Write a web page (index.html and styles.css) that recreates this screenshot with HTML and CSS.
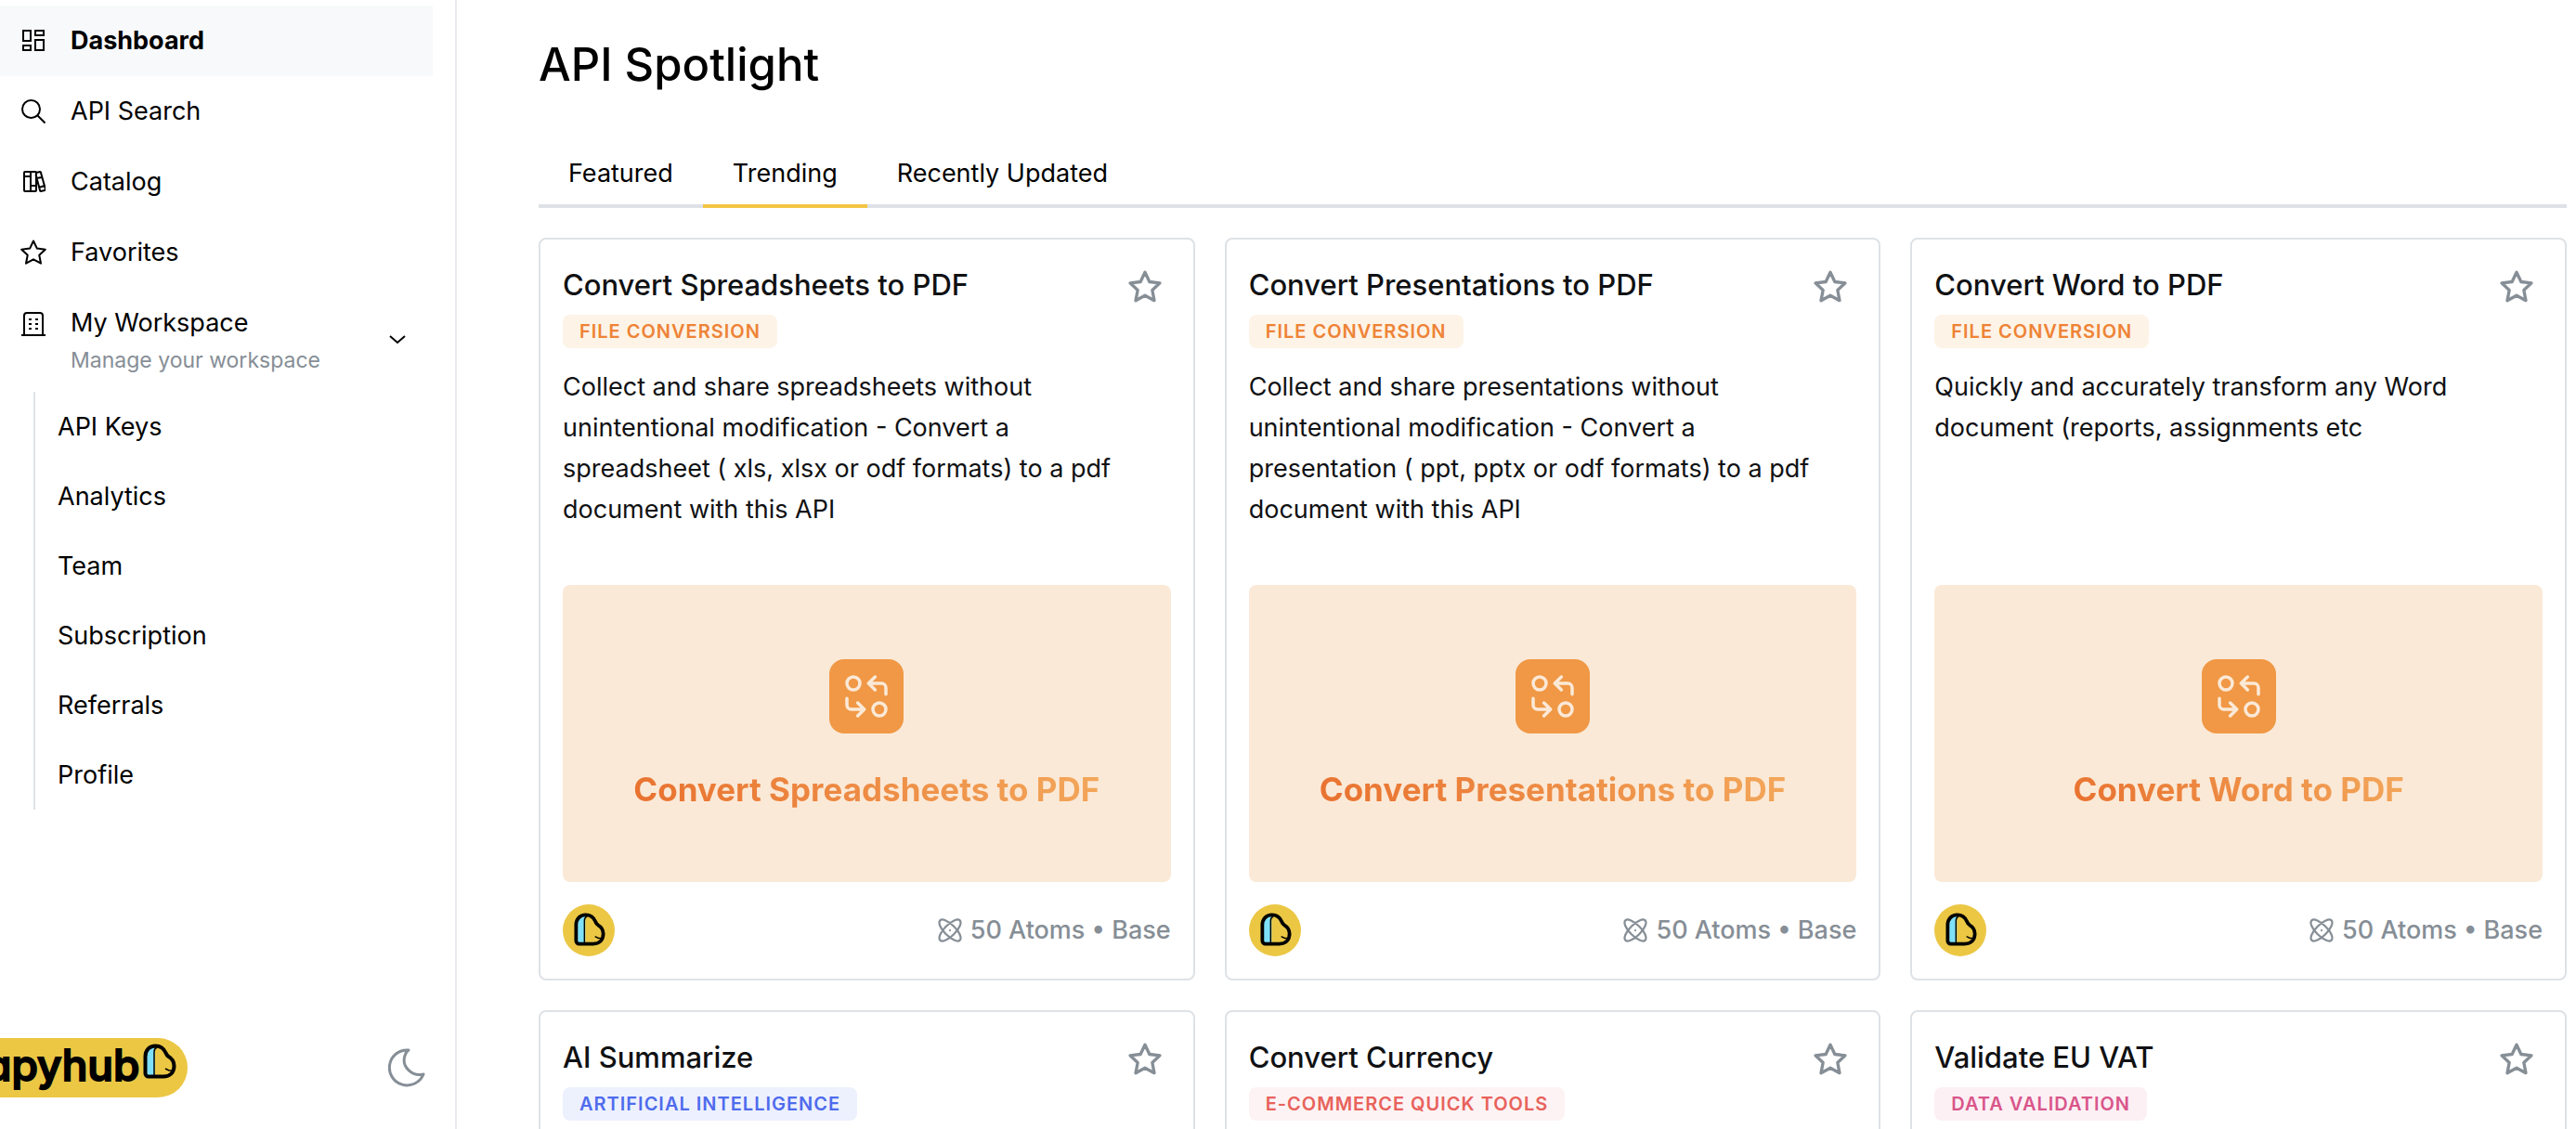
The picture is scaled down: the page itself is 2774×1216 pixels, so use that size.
FILE: index.html
```
<!doctype html>
<html lang="en">
<head>
<meta charset="utf-8">
<title>apyhub | Dashboard</title>
<link rel="stylesheet" href="styles.css">
</head>
<body>
<!-- shared icons -->
<svg class="sprite" aria-hidden="true">
<symbol id="star" viewBox="0 0 24 24"><path d="M12 2.6l2.9 6.1 6.7.8-4.9 4.6 1.3 6.7-6-3.3-6 3.3 1.3-6.7-4.9-4.6 6.7-.8z" stroke-linejoin="round"/></symbol>
<symbol id="transform" viewBox="0 0 24 24"><circle cx="6" cy="6" r="3"/><circle cx="18" cy="18" r="3"/><path d="M21 11V8a2 2 0 0 0-2-2h-6l3 3m0-6l-3 3M3 13v3a2 2 0 0 0 2 2h6l-3-3m0 6l3-3"/></symbol>
<symbol id="atom" viewBox="0 0 24 24"><path d="M12 12v.01M19.1 4.9c-1.6-1.6-6 .3-9.9 4.3s-5.900 8.300-4.300 9.900 6-.3 9.900-4.300 5.900-8.300 4.300-9.900zM4.900 4.900c-1.600 1.600.3 6 4.300 9.900s8.300 5.900 9.900 4.300-.3-6-4.300-9.900-8.300-5.900-9.900-4.300z"/></symbol>
<symbol id="mark" viewBox="0 0 36 38"><path d="M2 36V13C2 7 6 2.500 12 2h1v34z" fill="#7fe0f8" stroke="none"/><path d="M6 35.500a3.500 3.500 0 0 1-3.500-3.500V14C2.500 7 7 2.500 13.500 2.500c5.500 0 9 3 11 7.500.8 2 1.500 3 3 4 3.500 2 6 5.500 6 10 0 7-4.500 11.500-11.500 11.500z" stroke-width="4" stroke-linejoin="round"/><path d="M12 35V9c0-3 1-4 3-5M24 27l4 2h4" stroke-width="1.500"/></symbol>
</svg>

<aside class="sidebar">
<nav>
<a href="#" class="item active">
<svg class="icon" viewBox="0 0 26 26"><path d="M2 2h8v11H2zM15 2h9v5h-9zM2 18h8v5H2zM15 12h9v11h-9z"/></svg>
Dashboard</a>
<a href="#" class="item">
<svg class="icon" viewBox="0 0 26 26"><circle cx="10.500" cy="10.500" r="9.500"/><path d="M17.500 17.500l8 8"/></svg>
API Search</a>
<a href="#" class="item">
<svg class="icon" viewBox="0 0 26 26"><path d="M4 2h5q1 0 1 1v19q0 1-1 1H4q-1 0-1-1V3q0-1 1-1zM10 3q0-1 1-1h4q1 0 1 1v19q0 1-1 1h-4q-1 0-1-1zM3 7h6M10 17h5M16 3l4-1q1 0 1 1l5 18q0 1-1 1l-4 1q-1 0-1-1L15.500 5M16 9l6-1M19 19l6-2"/></svg>
Catalog</a>
<a href="#" class="item">
<svg class="icon wide"><use href="#star"/></svg>
Favorites</a>
<button class="item workspace">
<svg class="icon" viewBox="0 0 26 26"><path d="M0 25h26M3 25V4q0-3 3-3h14q3 0 3 3v21M8 8h3m4 0h3M8 13h3m4 0h3M8 18h3m4 0h3"/></svg>
<span class="names">My Workspace<small>Manage your workspace</small></span>
<svg class="chevron" viewBox="0 0 18 10"><path d="M1 1l8 7 8-7"/></svg>
</button>
<div class="subnav">
<a href="#">API Keys</a>
<a href="#">Analytics</a>
<a href="#">Team</a>
<a href="#">Subscription</a>
<a href="#">Referrals</a>
<a href="#">Profile</a>
</div>
</nav>
<footer class="bottom">
<a href="#" class="logo">apyhub<svg><use href="#mark"/></svg></a>
<button class="theme" aria-label="Toggle dark mode">
<svg viewBox="0 0 40 42"><path d="M22 2A19 19 0 1 0 38 28C26 31 14 20 18 8Q19 4 22 2z"/></svg>
</button>
</footer>
</aside>

<main>
<h1>API Spotlight</h1>
<div class="tabs" role="tablist">
<button role="tab">Featured</button>
<button role="tab" class="selected" aria-selected="true">Trending</button>
<button role="tab">Recently Updated</button>
</div>

<section class="cards">
<article class="card">
<header><h2>Convert Spreadsheets to PDF</h2><button class="fav" aria-label="Add to favorites"><svg><use href="#star"/></svg></button></header>
<span class="badge orange">File Conversion</span>
<p>Collect and share spreadsheets without unintentional modification - Convert a spreadsheet ( xls, xlsx or odf formats) to a pdf document with this API</p>
<div class="cover"><span class="tile"><svg><use href="#transform"/></svg></span><strong>Convert Spreadsheets to PDF</strong></div>
<div class="info"><span class="avatar"><svg><use href="#mark"/></svg></span><span class="price"><svg><use href="#atom"/></svg>50 Atoms • Base</span></div>
</article>

<article class="card">
<header><h2>Convert Presentations to PDF</h2><button class="fav" aria-label="Add to favorites"><svg><use href="#star"/></svg></button></header>
<span class="badge orange">File Conversion</span>
<p>Collect and share presentations without unintentional modification - Convert a presentation ( ppt, pptx or odf formats) to a pdf document with this API</p>
<div class="cover"><span class="tile"><svg><use href="#transform"/></svg></span><strong>Convert Presentations to PDF</strong></div>
<div class="info"><span class="avatar"><svg><use href="#mark"/></svg></span><span class="price"><svg><use href="#atom"/></svg>50 Atoms • Base</span></div>
</article>

<article class="card">
<header><h2>Convert Word to PDF</h2><button class="fav" aria-label="Add to favorites"><svg><use href="#star"/></svg></button></header>
<span class="badge orange">File Conversion</span>
<p>Quickly and accurately transform any Word document (reports, assignments etc</p>
<div class="cover"><span class="tile"><svg><use href="#transform"/></svg></span><strong>Convert Word to PDF</strong></div>
<div class="info"><span class="avatar"><svg><use href="#mark"/></svg></span><span class="price"><svg><use href="#atom"/></svg>50 Atoms • Base</span></div>
</article>

<article class="card">
<header><h2>AI Summarize</h2><button class="fav" aria-label="Add to favorites"><svg><use href="#star"/></svg></button></header>
<span class="badge indigo">Artificial Intelligence</span>
</article>

<article class="card">
<header><h2>Convert Currency</h2><button class="fav" aria-label="Add to favorites"><svg><use href="#star"/></svg></button></header>
<span class="badge red">E-Commerce Quick Tools</span>
</article>

<article class="card">
<header><h2>Validate EU VAT</h2><button class="fav" aria-label="Add to favorites"><svg><use href="#star"/></svg></button></header>
<span class="badge pink">Data Validation</span>
</article>
</section>
</main>
</body>
</html>
```
FILE: styles.css
```
* {
	box-sizing : border-box;
}
body {
	margin : 0;
	display : flex;
	height : 100vh;
	overflow : hidden;
	background : #fff;
	color : #000;
	font-family : Inter, "Liberation Sans", sans-serif;
	font-size : 27px;
	line-height : 44px;
}
a {
	color : inherit;
	text-decoration : none;
}
button {
	font : inherit;
	color : inherit;
	background : none;
	border : 0;
	padding : 0;
	text-align : left;
	cursor : pointer;
}
svg {
	display : block;
	flex : none;
	fill : none;
	stroke : currentColor;
	stroke-width : 2;
}
.sprite {
	position : absolute;
	width : 0;
	height : 0;
}

/* sidebar */
.sidebar {
	width : 492px;
	flex : none;
	display : flex;
	flex-direction : column;
	justify-content : space-between;
	padding : 6px 24px 34px 0;
	border-right : 2px solid #e9eaef;
	overflow : hidden;
}
.item {
	display : flex;
	align-items : center;
	width : 100%;
	padding : 16px 29px 16px 23px;
	gap : 27px;
}
.icon {
	width : 26px;
	height : 26px;
}
.icon.wide {
	width : 32px;
	height : 32px;
	margin : 0 -3px;
	stroke-width : 1.5;
}
.active {
	background : #f8f9fb;
	font-weight : 700;
}
.workspace {
	align-items : flex-start;
}
.workspace .icon {
	margin-top : 10px;
}
.names {
	flex : 1;
}
.names small {
	display : block;
	font-size : 23px;
	line-height : 36px;
	color : #868e96;
}
.chevron {
	width : 18px;
	height : 10px;
	align-self : center;
}
.subnav {
	display : flex;
	flex-direction : column;
	margin-left : 36px;
	border-left : 2px solid #dee2e6;
}
.subnav a {
	padding : 16px 24px;
	line-height : 43px;
}
.bottom {
	display : flex;
	align-items : center;
	justify-content : space-between;
	padding-right : 8px;
}
.logo {
	display : flex;
	align-items : center;
	gap : 4px;
	height : 64px;
	margin-left : -32px;
	padding : 0 12px 6px 16px;
	border-radius : 0 32px 32px 0;
	background : #ebc744;
	font-size : 46px;
	font-weight : 500;
	font-feature-settings : "cv11";
	-webkit-text-stroke : 2px #000;
}
.logo svg {
	width : 36px;
	height : 38px;
	margin-bottom : 8px;
}
.theme {
	color : #868e96;
}
.theme svg {
	width : 40px;
	height : 42px;
	stroke-width : 3;
	stroke-linejoin : round;
}

/* content */
main {
	flex : 1;
	min-width : 0;
	padding : 30px 10px 0 88px;
}
h1 {
	margin : 0;
	font-size : 49px;
	font-weight : 500;
	line-height : 80px;
}
.tabs {
	display : flex;
	margin-top : 46px;
	box-shadow : inset 0 -4px #dee2e6;
}
.tabs button {
	padding : 9px 32px 11px;
	border-bottom : 4px solid transparent;
}
.tabs .selected {
	border-color : #f3c544;
}
.cards {
	display : grid;
	grid-template-columns : repeat(3, 1fr);
	grid-auto-rows : 1fr;
	gap : 32px;
	margin-top : 32px;
}
.card {
	display : flex;
	flex-direction : column;
	align-items : flex-start;
	padding : 24px;
	border : 2px solid #dee2e6;
	border-radius : 8px;
	color : #101113;
}
.card header {
	display : flex;
	align-items : center;
	justify-content : space-between;
	width : 100%;
	padding-right : 8px;
}
h2 {
	margin : 0;
	font-size : 31px;
	font-weight : 500;
	line-height : 49px;
}
.fav {
	padding-top : 4px;
	color : #868e96;
}
.fav svg {
	width : 40px;
	height : 40px;
}
.badge {
	margin-top : 8px;
	padding : 0 18px;
	border-radius : 8px;
	font-size : 20px;
	font-weight : 600;
	line-height : 36px;
	letter-spacing : 1px;
	text-transform : uppercase;
}
.orange {
	color : #ee8336;
	background : #fdf3e7;
}
.indigo {
	color : #4f6bed;
	background : #edf1fe;
}
.red {
	color : #e8625c;
	background : #fdf3f4;
}
.pink {
	color : #d9568a;
	background : #fcf0f5;
}
.card p {
	margin : 20px 0 59px;
	padding-right : 24px;
}
.cover {
	display : flex;
	flex-direction : column;
	align-items : center;
	justify-content : center;
	gap : 32px;
	width : 100%;
	height : 320px;
	margin-top : auto;
	padding-top : 8px;
	border-radius : 8px;
	background : #fbe9d7;
}
.tile {
	padding : 12px;
	border-radius : 16px;
	background : #f09845;
	color : #fbe9d7;
}
.tile svg {
	width : 56px;
	height : 56px;
	stroke-width : 1.5;
	stroke-linecap : round;
	stroke-linejoin : round;
}
.cover strong {
	font-size : 35px;
	line-height : 56px;
	color : transparent;
	background : linear-gradient(45deg, #e8702e, #f3a95c);
	background-clip : text;
	-webkit-background-clip : text;
}
.info {
	display : flex;
	align-items : center;
	justify-content : space-between;
	width : 100%;
	margin-top : 24px;
	color : #868e96;
	font-weight : 500;
}
.avatar {
	display : flex;
	align-items : center;
	justify-content : center;
	width : 56px;
	height : 56px;
	padding : 0 0 2px 2px;
	border-radius : 50%;
	background : #ebc744;
	color : #000;
}
.avatar svg {
	width : 34px;
	height : 36px;
}
.price {
	display : flex;
	align-items : center;
	gap : 4px;
}
.price svg {
	width : 36px;
	height : 36px;
	stroke-width : 1.5;
	stroke-linecap : round;
}
```
